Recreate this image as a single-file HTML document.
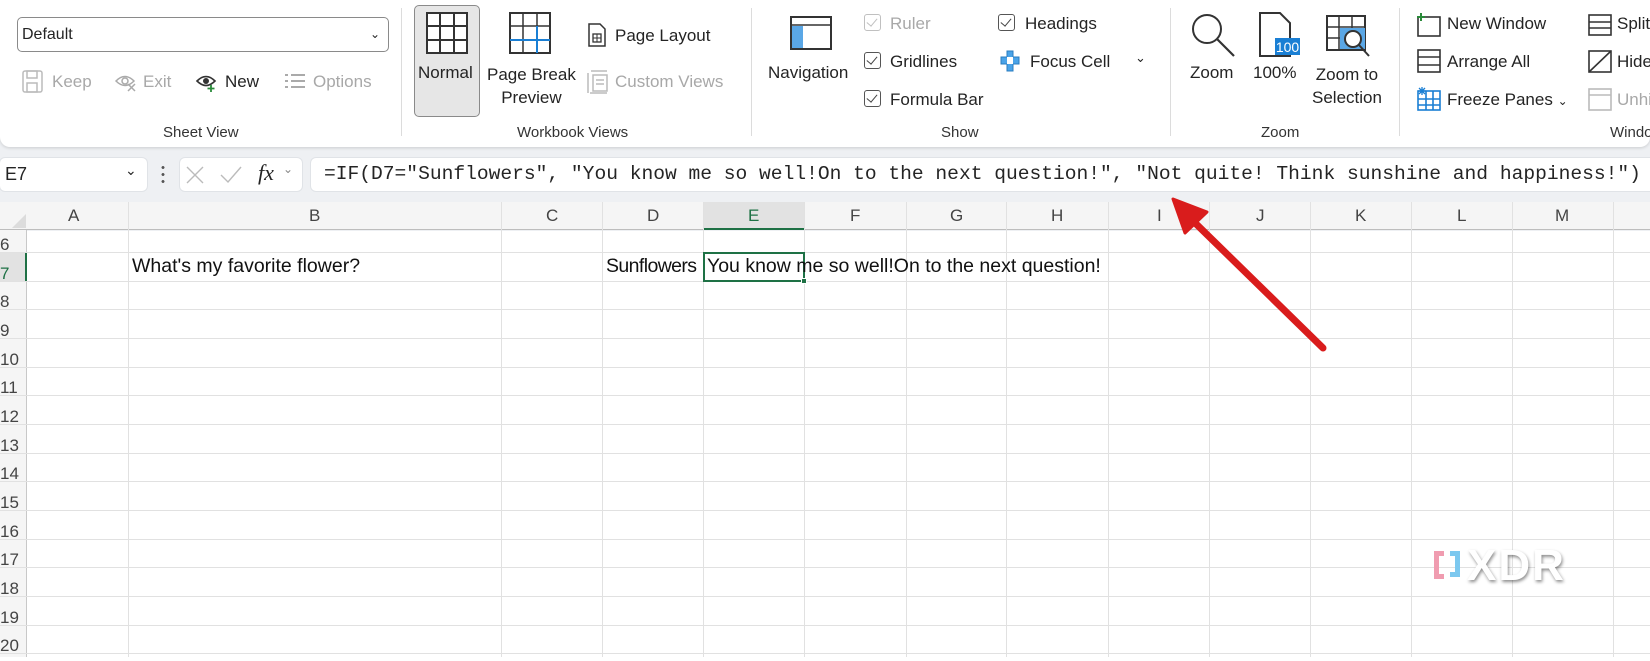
<!DOCTYPE html>
<html><head><meta charset="utf-8"><style>
*{margin:0;padding:0;box-sizing:border-box}
body{width:1650px;height:657px;overflow:hidden;background:#fff;font-family:"Liberation Sans",sans-serif;color:#242424;position:relative}
.a{position:absolute;white-space:nowrap}
.rib{position:absolute;left:0;top:0;width:1650px;height:147px;background:#fff;border-radius:0 0 10px 10px;box-shadow:0 1px 3px rgba(0,0,0,.15)}
.bg{position:absolute;left:0;top:0;width:1650px;height:231px;background:#eef0f3}
.t{font-size:17px}
.g{color:#a8a8a8}
.lbl{font-size:15px;color:#333}
.sep{position:absolute;top:8px;width:1px;height:128px;background:#dcdcdc}
.cb{position:absolute;width:17px;height:17px;border:1.3px solid #555;border-radius:3px}
.cb:after{content:"";position:absolute;left:4px;top:1px;width:5px;height:9px;border:solid #444;border-width:0 1.5px 1.5px 0;transform:rotate(40deg)}
.cb.dis{border-color:#c0c0c0}.cb.dis:after{border-color:#c0c0c0}
.box{position:absolute;background:#fff;border-radius:5px;box-shadow:0 0 0 1px #e0e3e7}
.vl{position:absolute;top:202px;width:1px;height:455px;background:#e1e1e1}
.hl{position:absolute;left:0;width:1650px;height:1px;background:#e1e1e1}
.ct{font-size:19.5px;color:#111}
</style></head><body>
<div class="bg"></div>
<div class="rib"></div>
<div class="a" style="left:17px;top:17px;width:372px;height:35px;border:1px solid #8a8a8a;border-radius:5px;font-size:16px;line-height:33px;padding-left:4px">Default<span style="position:absolute;right:8px;top:0;font-size:12px">&#8964;</span></div>
<svg class="a" style="left:22px;top:70px" width="22" height="24"><rect x="1" y="1" width="19" height="21" rx="2" fill="none" stroke="#bbb" stroke-width="1.5"/><rect x="5" y="1" width="10" height="7" fill="none" stroke="#bbb" stroke-width="1.5"/><rect x="5" y="13" width="10" height="9" fill="none" stroke="#bbb" stroke-width="1.5"/></svg>
<div class="a t g" style="left:52px;top:72px">Keep</div>
<svg class="a" style="left:114px;top:72px" width="24" height="20"><path d="M2 9 Q11 0 20 9 Q11 18 2 9Z" fill="none" stroke="#aaa" stroke-width="1.5"/><circle cx="11" cy="9" r="3" fill="none" stroke="#aaa" stroke-width="1.5"/><path d="M14 12l7 7M21 12l-7 7" stroke="#aaa" stroke-width="1.5"/></svg>
<div class="a t g" style="left:143px;top:72px">Exit</div>
<svg class="a" style="left:195px;top:72px" width="24" height="20"><path d="M2 9 Q11 0 20 9 Q11 18 2 9Z" fill="none" stroke="#333" stroke-width="1.6"/><circle cx="11" cy="9" r="3" fill="#333"/><path d="M16 13v7M12.5 16.5h7" stroke="#2a8a3a" stroke-width="1.8"/></svg>
<div class="a t" style="left:225px;top:72px">New</div>
<svg class="a" style="left:284px;top:72px" width="22" height="20"><path d="M1 3h3M1 9h3M1 15h3M7 3h14M7 9h14M7 15h14" stroke="#aaa" stroke-width="2"/></svg>
<div class="a t g" style="left:313px;top:72px">Options</div>
<div class="a lbl" style="left:163px;top:124px">Sheet View</div>
<div class="sep" style="left:401px"></div>
<div class="a" style="left:414px;top:5px;width:66px;height:112px;background:#e6e6e6;border:1px solid #8a8a8a;border-radius:5px"></div>
<svg class="a" style="left:426px;top:12px" width="42" height="42"><rect x="1" y="1" width="40" height="40" fill="#fff" stroke="#333" stroke-width="2"/><path d="M14 1v40M28 1v40M1 14h40M1 28h40" stroke="#333" stroke-width="2"/></svg>
<div class="a t" style="left:418px;top:63px">Normal</div>
<svg class="a" style="left:509px;top:12px" width="42" height="42"><rect x="1" y="1" width="40" height="40" fill="#fff" stroke="#333" stroke-width="2"/><path d="M14 1v40M28 1v40M1 14h40" stroke="#333" stroke-width="1.5"/><path d="M1 28h40M28 14v27" stroke="#1a7fd4" stroke-width="2"/></svg>
<div class="a t" style="left:487px;top:63px;text-align:center;line-height:23px">Page Break<br>Preview</div>
<svg class="a" style="left:588px;top:23px" width="18" height="24"><path d="M1 1h11l5 5v17H1Z" fill="none" stroke="#333" stroke-width="1.5"/><rect x="5" y="11" width="8" height="8" fill="none" stroke="#333" stroke-width="1.3"/><path d="M9 11v8M5 15h8" stroke="#333"/></svg>
<div class="a t" style="left:615px;top:26px">Page Layout</div>
<svg class="a" style="left:587px;top:70px" width="22" height="24"><path d="M1 3v20M4 1h16M3 23h17" stroke="#bbb" stroke-width="1.5"/><rect x="6" y="5" width="14" height="16" fill="none" stroke="#bbb" stroke-width="1.5"/><path d="M9 10h8M9 14h8" stroke="#bbb" stroke-width="1.5"/></svg>
<div class="a t g" style="left:615px;top:72px">Custom Views</div>
<div class="a lbl" style="left:517px;top:124px">Workbook Views</div>
<div class="sep" style="left:751px"></div>
<svg class="a" style="left:790px;top:16px" width="42" height="34"><rect x="1" y="1" width="40" height="32" fill="#fff" stroke="#333" stroke-width="2"/><path d="M1 9h40" stroke="#333" stroke-width="1.5"/><rect x="2" y="10" width="11" height="22" fill="#5aa7e6"/></svg>
<div class="a t" style="left:768px;top:63px">Navigation</div>
<div class="cb dis" style="left:864px;top:14px"></div><div class="a t g" style="left:890px;top:14px">Ruler</div>
<div class="cb" style="left:864px;top:52px"></div><div class="a t" style="left:890px;top:52px">Gridlines</div>
<div class="cb" style="left:864px;top:90px"></div><div class="a t" style="left:890px;top:90px">Formula Bar</div>
<div class="cb" style="left:998px;top:14px"></div><div class="a t" style="left:1025px;top:14px">Headings</div>
<svg class="a" style="left:1000px;top:50px" width="20" height="22"><path d="M7 1h6v6h6v7h-6v7H7v-7H1V7h6Z" fill="#4aa3e8" stroke="#2a7cc0"/><rect x="7" y="7" width="6" height="7" fill="#fff"/></svg>
<div class="a t" style="left:1030px;top:52px">Focus Cell</div>
<div class="a" style="left:1135px;top:50px;font-size:13px">&#8964;</div>
<div class="a lbl" style="left:941px;top:124px">Show</div>
<div class="sep" style="left:1170px"></div>
<svg class="a" style="left:1190px;top:12px" width="46" height="46"><circle cx="17" cy="17" r="14" fill="none" stroke="#333" stroke-width="2"/><path d="M27 27l17 17" stroke="#333" stroke-width="2.2"/></svg>
<div class="a t" style="left:1190px;top:63px">Zoom</div>
<svg class="a" style="left:1259px;top:12px" width="42" height="46"><path d="M1 1h20l10 10v33H1Z" fill="#fff" stroke="#333" stroke-width="2"/><rect x="16" y="26" width="25" height="17" fill="#1a7fd4"/><text x="28.5" y="40" font-size="14" fill="#fff" text-anchor="middle" font-family="Liberation Sans">100</text></svg>
<div class="a t" style="left:1253px;top:63px">100%</div>
<svg class="a" style="left:1326px;top:15px" width="46" height="44"><rect x="1" y="1" width="38" height="34" fill="#fff" stroke="#333" stroke-width="2"/><path d="M1 12h38M1 23h38M13 1v34M26 1v34" stroke="#333" stroke-width="1.5"/><rect x="14" y="13" width="25" height="21" fill="#5aa7e6"/><circle cx="27" cy="24" r="8" fill="#fff" stroke="#333" stroke-width="2"/><path d="M33 30l10 11" stroke="#333" stroke-width="2"/></svg>
<div class="a t" style="left:1312px;top:63px;text-align:center;line-height:23px">Zoom to<br>Selection</div>
<div class="a lbl" style="left:1261px;top:124px">Zoom</div>
<div class="sep" style="left:1399px"></div>
<svg class="a" style="left:1416px;top:12px" width="26" height="26"><rect x="2" y="5" width="22" height="19" fill="none" stroke="#333" stroke-width="1.6"/><path d="M5 1v8M1 5h8" stroke="#2a8a3a" stroke-width="2"/></svg>
<div class="a t" style="left:1447px;top:14px">New Window</div>
<svg class="a" style="left:1416px;top:48px" width="26" height="26"><rect x="2" y="2" width="22" height="22" fill="none" stroke="#333" stroke-width="1.6"/><path d="M2 9h22M2 17h22" stroke="#333" stroke-width="1.6"/></svg>
<div class="a t" style="left:1447px;top:52px">Arrange All</div>
<svg class="a" style="left:1416px;top:86px" width="26" height="26"><rect x="2" y="5" width="22" height="19" fill="none" stroke="#1a7fd4" stroke-width="1.6"/><path d="M2 13h22M2 19h22M10 5v19M17 5v19" stroke="#1a7fd4" stroke-width="1.6"/><path d="M6 1v8M2 5h8M3 2l6 6M9 2l-6 6" stroke="#1a7fd4" stroke-width="1.3"/></svg>
<div class="a t" style="left:1447px;top:90px">Freeze Panes <span style="font-size:12px">&#8964;</span></div>
<svg class="a" style="left:1587px;top:12px" width="26" height="26"><rect x="2" y="3" width="22" height="20" fill="none" stroke="#333" stroke-width="1.6"/><path d="M2 10h22M2 16h22" stroke="#333" stroke-width="1.6"/></svg>
<div class="a t" style="left:1617px;top:14px">Split</div>
<svg class="a" style="left:1587px;top:48px" width="26" height="26"><rect x="2" y="3" width="22" height="21" fill="none" stroke="#333" stroke-width="1.6"/><path d="M2 24L24 3" stroke="#333" stroke-width="1.6"/></svg>
<div class="a t" style="left:1617px;top:52px">Hide</div>
<svg class="a" style="left:1587px;top:86px" width="26" height="26"><rect x="2" y="3" width="22" height="21" fill="none" stroke="#bbb" stroke-width="1.6"/><path d="M2 9h22" stroke="#bbb" stroke-width="1.6"/></svg>
<div class="a t g" style="left:1617px;top:90px">Unhide</div>
<div class="a lbl" style="left:1610px;top:124px">Window</div>
<div class="box" style="left:0;top:158px;width:147px;height:33px"></div>
<div class="a" style="left:5px;top:164px;font-size:18px">E7</div>
<div class="a" style="left:125px;top:162px;font-size:14px">&#8964;</div>
<div class="a" style="left:161px;top:164px;width:4px;height:19px;background:radial-gradient(circle,#555 1.3px,transparent 1.6px) 0 0/4px 7px"></div>
<div class="box" style="left:180px;top:158px;width:122px;height:33px"></div>
<svg class="a" style="left:185px;top:165px" width="20" height="20"><path d="M2 2l16 16M18 2L2 18" stroke="#bbb" stroke-width="1.4"/></svg>
<svg class="a" style="left:219px;top:165px" width="24" height="20"><path d="M2 10l7 7L22 2" fill="none" stroke="#bbb" stroke-width="1.4"/></svg>
<div class="a" style="left:258px;top:160px;font-family:'Liberation Serif',serif;font-style:italic;font-size:22px">fx</div>
<div class="a" style="left:283px;top:162px;font-size:12px;color:#888">&#8964;</div>
<div class="box" style="left:311px;top:158px;width:1345px;height:33px"></div>
<div class="a" style="left:324px;top:163px;font-family:'Liberation Mono',monospace;font-size:19.6px">=IF(D7="Sunflowers", "You know me so well!On to the next question!", "Not quite! Think sunshine and happiness!")</div>
<div class="a" style="left:0;top:202px;width:1650px;height:28px;background:#f5f5f5;border-bottom:1px solid #bdbdbd"></div>
<div class="a" style="left:0;top:230px;width:27px;height:427px;background:#f5f5f5;border-right:1px solid #c8c8c8"></div>
<svg class="a" style="left:12px;top:214px" width="14" height="14"><path d="M14 0V14H0Z" fill="#dcdcdc"/></svg>
<div class="a" style="left:703px;top:202px;width:101px;height:28px;background:#e2e2e2;border-bottom:2px solid #1e7145"></div>
<div class="a" style="left:0;top:253px;width:27px;height:28px;background:#e2e2e2;border-right:2px solid #1e7145"></div>
<div class="vl" style="left:128px"></div><div class="vl" style="left:501px"></div><div class="vl" style="left:602px"></div><div class="vl" style="left:703px"></div><div class="vl" style="left:804px"></div><div class="vl" style="left:906px"></div><div class="vl" style="left:1006px"></div><div class="vl" style="left:1108px"></div><div class="vl" style="left:1209px"></div><div class="vl" style="left:1310px"></div><div class="vl" style="left:1411px"></div><div class="vl" style="left:1512px"></div><div class="vl" style="left:1613px"></div>
<div class="a" style="left:0;top:202px;width:1650px;height:28px;font-size:17px;color:#444;line-height:28px">
<span class="a" style="left:68px">A</span><span class="a" style="left:309px">B</span><span class="a" style="left:546px">C</span><span class="a" style="left:647px">D</span><span class="a" style="left:748px;color:#1e7145">E</span><span class="a" style="left:850px">F</span><span class="a" style="left:950px">G</span><span class="a" style="left:1051px">H</span><span class="a" style="left:1157px">I</span><span class="a" style="left:1256px">J</span><span class="a" style="left:1355px">K</span><span class="a" style="left:1457px">L</span><span class="a" style="left:1555px">M</span></div>
<div class="hl" style="top:252px"></div><div class="hl" style="top:281px"></div><div class="hl" style="top:309px"></div><div class="hl" style="top:338px"></div><div class="hl" style="top:367px"></div><div class="hl" style="top:395px"></div><div class="hl" style="top:424px"></div><div class="hl" style="top:453px"></div><div class="hl" style="top:481px"></div><div class="hl" style="top:510px"></div><div class="hl" style="top:539px"></div><div class="hl" style="top:567px"></div><div class="hl" style="top:596px"></div><div class="hl" style="top:625px"></div><div class="hl" style="top:653px"></div>
<div class="a" style="left:0;top:231px;font-size:17px;color:#444;line-height:28.67px;width:27px">6<br><span style="color:#1e7145">7</span><br>8<br>9<br>10<br>11<br>12<br>13<br>14<br>15<br>16<br>17<br>18<br>19<br>20</div>
<div class="a ct" style="left:132px;top:255px">What's my favorite flower?</div>
<div class="a ct" style="left:606px;top:255px;letter-spacing:-0.6px">Sunflowers</div>
<div class="a" style="left:703px;top:252px;width:102px;height:30px;border:2px solid #1e7145"></div>
<div class="a" style="left:801px;top:278px;width:6px;height:6px;background:#1e7145;border:1px solid #fff"></div>
<div class="a ct" style="left:707px;top:255px">You know me so well!On to the next question!</div>
<svg class="a" style="left:0;top:0" width="1650" height="657"><path d="M1323 348L1188 216" stroke="#d91c1c" stroke-width="7" stroke-linecap="round"/><path d="M1173 199L1207 212L1185 233Z" fill="#d91c1c" stroke="#d91c1c" stroke-width="3" stroke-linejoin="round"/></svg>
<div class="a" style="left:1434px;top:551px;width:10px;height:28px;border:5px solid #f09cb0;border-right:none"></div>
<div class="a" style="left:1450px;top:551px;width:10px;height:26px;border:5px solid #7cc8ef;border-left:none"></div>
<div class="a" style="left:1467px;top:541px;font-size:44px;font-weight:bold;color:#fff;letter-spacing:2px;text-shadow:1px 2px 3px rgba(0,0,0,.45)">XDR</div>
</body></html>
